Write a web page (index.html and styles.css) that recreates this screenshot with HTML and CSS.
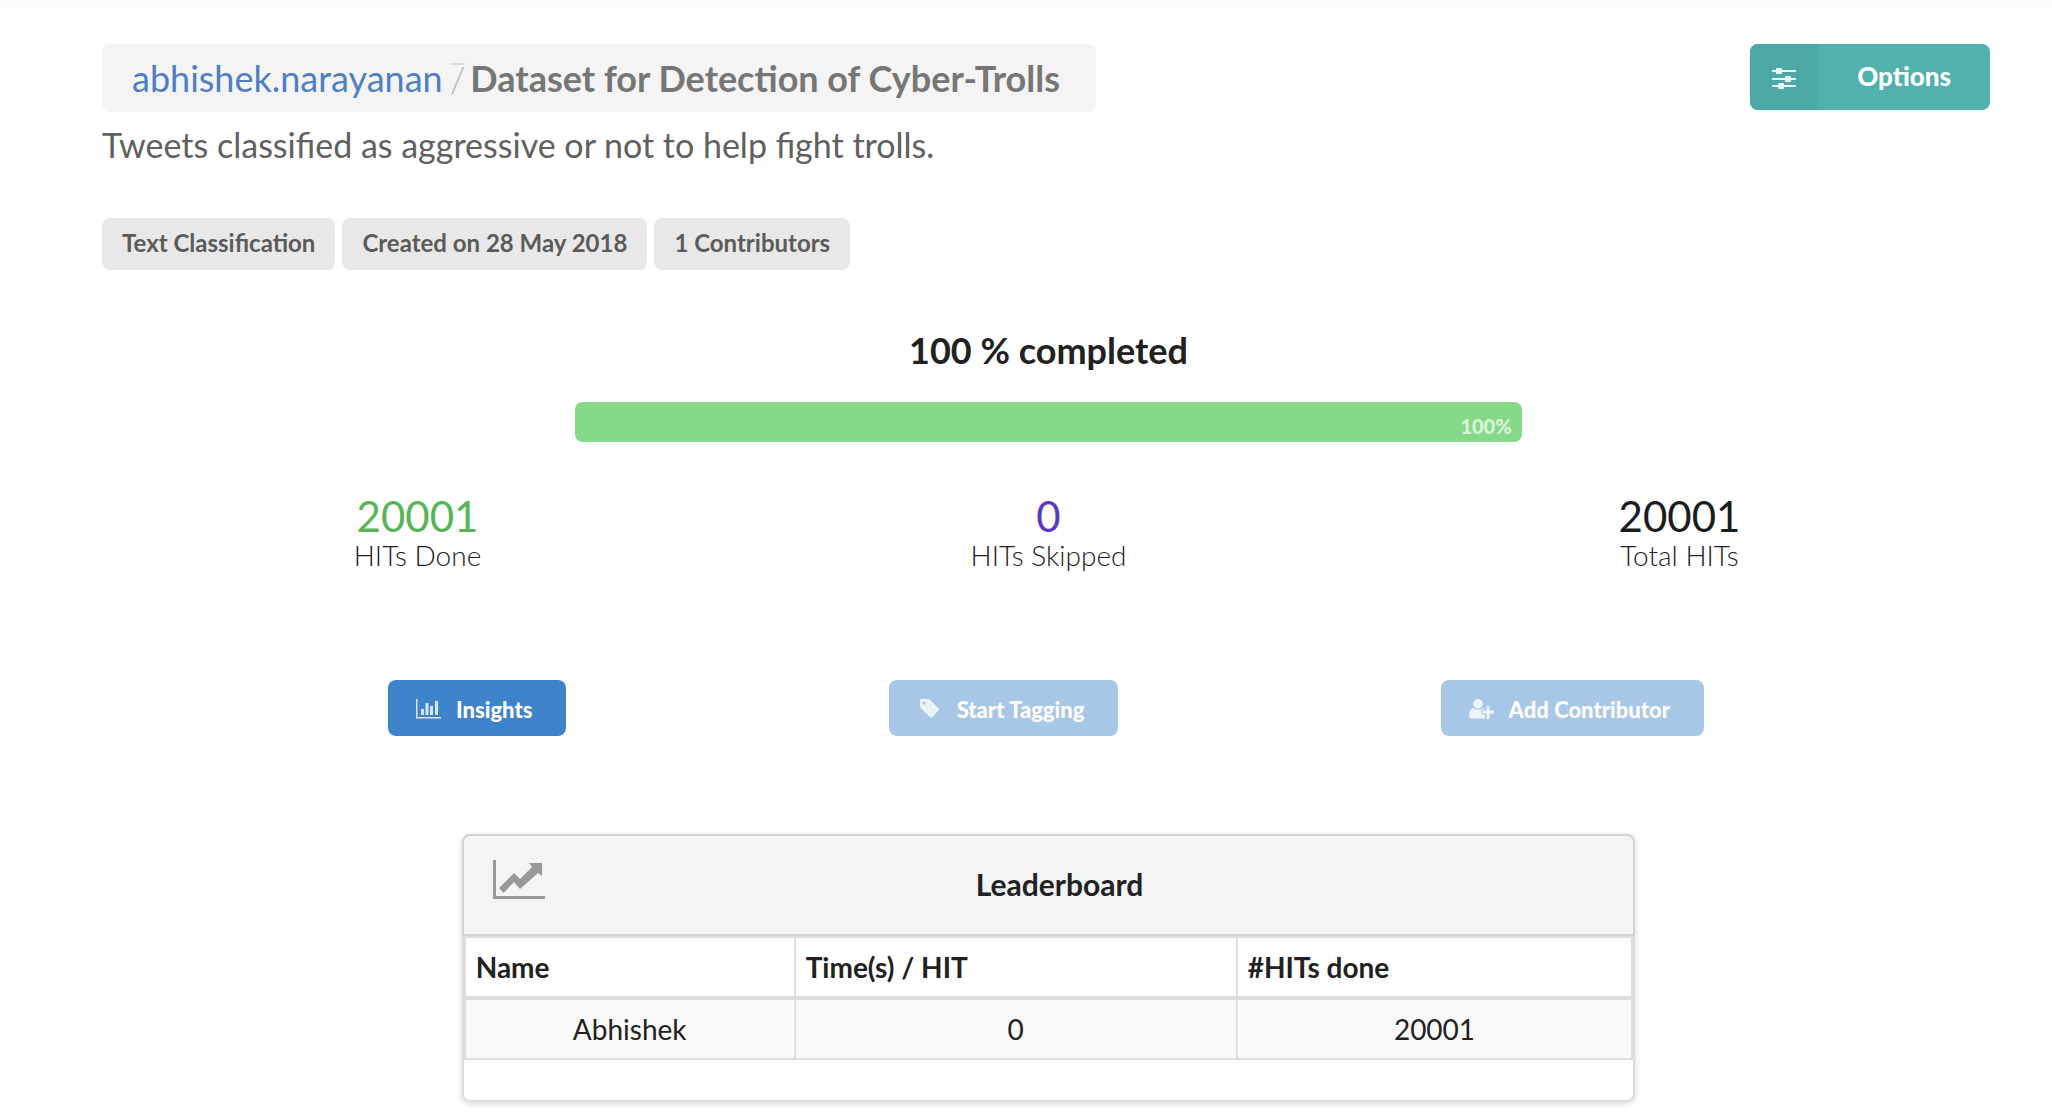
FILE: index.html
```html
<!DOCTYPE html>
<html lang="en">
<head>
  <meta charset="UTF-8">
  <meta name="viewport" content="width=device-width, initial-scale=1">
  <title>Dataset for Detection of Cyber-Trolls</title>
  <link rel="stylesheet" href="styles.css">
</head>
<body>
  <main class="page">
    <!-- Project header -->
    <header class="top">
      <div>
        <nav class="breadcrumb">
          <a href="#">abhishek.narayanan</a>
          <span class="divider">/</span>
          <h1>Dataset for Detection of Cyber-Trolls</h1>
        </nav>
        <p class="tagline">Tweets classified as aggressive or not to help fight trolls.</p>
      </div>
      <button class="options">
        <span class="options-icon">
          <svg width="24" height="22" viewBox="0 0 24 22" fill="currentColor">
            <path d="M0 2h24v2H0zM0 10h24v2H0zM0 17h24v2H0z"/>
            <rect x="4" y="0" width="6" height="6" rx="1"/>
            <rect x="13" y="8" width="6" height="6" rx="1"/>
            <rect x="6" y="15" width="6" height="6" rx="1"/>
          </svg>
        </span>
        <span class="options-text">Options</span>
      </button>
    </header>

    <div class="labels">
      <span class="label">Text Classification</span>
      <span class="label">Created on 28 May 2018</span>
      <span class="label">1 Contributors</span>
    </div>

    <!-- Progress -->
    <h2 class="completed">100 % completed</h2>
    <div class="progress"><div class="bar" style="width:100%">100%</div></div>

    <section class="stats">
      <div class="stat"><div class="value green">20001</div><div class="name">HITs Done</div></div>
      <div class="stat"><div class="value violet">0</div><div class="name">HITs Skipped</div></div>
      <div class="stat"><div class="value">20001</div><div class="name">Total HITs</div></div>
    </section>

    <section class="actions">
      <button class="btn">
        <svg width="26" height="20" viewBox="0 0 26 20" fill="currentColor">
          <path d="M0 0h1.500v18H25v1.500H0zM5 10h3v6H5zM9.500 4h3v12h-3zM14 7h3v9h-3zM19 2h3v14h-3z"/>
        </svg>
        Insights
      </button>
      <button class="btn" disabled>
        <svg width="26" height="20" viewBox="-3 0 26 20" fill="currentColor" fill-rule="evenodd">
          <path d="M1.500 0H8q1.200 0 2 .8l8.400 8.400q1 1.100 0 2.200l-6.200 6.800q-1 1-2.100 0L1 9.300Q0 8.300 0 7V1.500Q0 0 1.500 0zM4 2.500a1.600 1.600 0 1 0 0 3.200 1.600 1.600 0 0 0 0-3.200z"/>
        </svg>
        Start Tagging
      </button>
      <button class="btn" disabled>
        <svg width="26" height="20" viewBox="0 0 26 20" fill="currentColor">
          <circle cx="9" cy="4.800" r="4.800"/>
          <path d="M4 9q5 3.600 10 0 1 .4 1.700 1.500V10.500H12.500V15.500H16V19.500H3q-3 0-3-3Q0 10.500 4 9z"/>
          <path d="M17.500 7h3v4.500H25v3h-4.500V20h-3v-5.500H13.500v-3h4z"/>
        </svg>
        Add Contributor
      </button>
    </section>

    <!-- Leaderboard -->
    <section class="board">
      <div class="board-head">
        <svg width="52" height="40" viewBox="0 0 52 40" fill="currentColor">
          <path d="M0 0h3v36h49v3H0z"/>
          <path d="M6 28 21 13l6 6L39 7l-3-4h13v13l-4-3-18 16-6-7-10.500 11z"/>
        </svg>
        <h3>Leaderboard</h3>
      </div>
      <table>
        <thead>
          <tr><th class="c-name">Name</th><th class="c-time">Time(s) / HIT</th><th>#HITs done</th></tr>
        </thead>
        <tbody>
          <tr><td>Abhishek</td><td>0</td><td>20001</td></tr>
        </tbody>
      </table>
    </section>
  </main>
</body>
</html>
```
FILE: styles.css
```css
* {box-sizing:border-box;margin:0;padding:0;}
body {background:#fff linear-gradient(#fafafa,#fff) no-repeat 0 0/100% 16px;color:#212121;font-family:Lato,"Liberation Sans",sans-serif;font-size:28px;}
button {font-family:inherit;border:none;cursor:pointer;}
h1,h2,h3 {font-size:inherit;font-weight:700;}

.page {padding:44px 57px 10px 102px;}

.top {display:flex;justify-content:space-between;align-items:flex-start;padding-right:5px;}
.breadcrumb {display:inline-flex;align-items:center;height:68px;padding:0 36px 0 30px;background:#f4f4f4;border-radius:8px;font-size:36px;line-height:44px;color:#767676;}
.breadcrumb a {color:#4e7fc4;text-decoration:none;}
.divider {margin:0 5px 0 7px;border-top:2px solid #ddd;color:#b3b3b3;font-weight:300;line-height:28px;}
.tagline {margin-top:11px;font-size:34px;line-height:44px;color:#606060;}

.options {display:flex;height:66px;border-radius:8px;overflow:hidden;background:#50b1ad;color:#fff;font-size:26px;font-weight:900;line-height:64px;}
.options-icon {display:flex;align-items:center;justify-content:center;width:68px;height:66px;padding-top:4px;background:#4ca9a5;color:#e8f5f4;}
.options-text {padding:0 39px;}

.labels {display:flex;gap:7px;margin-top:51px;}
.label {padding:0 20px 2px;border-radius:8px;background:#e8e8e8;color:#5b5b5b;font-size:24px;font-weight:700;line-height:50px;}

.completed {margin-top:58px;font-size:36px;line-height:44px;text-align:center;}
.progress {width:50%;margin:30px auto 0;border-radius:8px;background:#e6e6e6;}
.bar {height:40px;padding:0 10px;border-radius:8px;background:#86d989;color:#daf4db;font-size:20px;font-weight:900;line-height:48px;text-align:right;}

.stats {display:grid;grid-template-columns:repeat(3,1fr);margin-top:52px;text-align:center;}
.value {font-size:42px;line-height:44px;color:#1b1c1d;}
.green {color:#56b554;}
.violet {color:#5a38c4;}
.name {font-size:28px;font-weight:300;line-height:34px;}

.actions {display:flex;justify-content:space-between;width:1321px;max-width:100%;margin:108px auto 0;padding-right:5px;}
.btn {display:flex;align-items:center;gap:14px;height:56px;padding:2px 34px 0 28px;border-radius:8px;background:#3f83ca;color:#fff;font-size:22px;font-weight:900;}
.btn svg {opacity:.8;}
.btn:disabled {background:#a8c6e6;cursor:default;}

.board {width:62%;margin:98px auto 0;padding-bottom:40px;border:2px solid #ddd;border-radius:8px;box-shadow:0 2px 6px rgba(0,0,0,.15);}
.board-head {display:flex;align-items:center;height:102px;margin:-2px -2px 0;padding:0 29px;border:2px solid #d4d4d5;border-radius:8px 8px 0 0;background:#f3f4f5;}
.board-head svg {margin-bottom:10px;color:#999;}
.board-head h3 {flex:1;padding:0 30px 2px 0;font-size:30px;text-align:center;}
table {width:100%;border-collapse:collapse;table-layout:fixed;}
th,td {height:61px;border:2px solid #ddd;padding:0 10px;line-height:36px;}
th {text-align:left;border-bottom-width:4px;}
td {text-align:center;background:#f9f9f9;}
.c-name {width:330px;}
.c-time {width:442px;}
```
